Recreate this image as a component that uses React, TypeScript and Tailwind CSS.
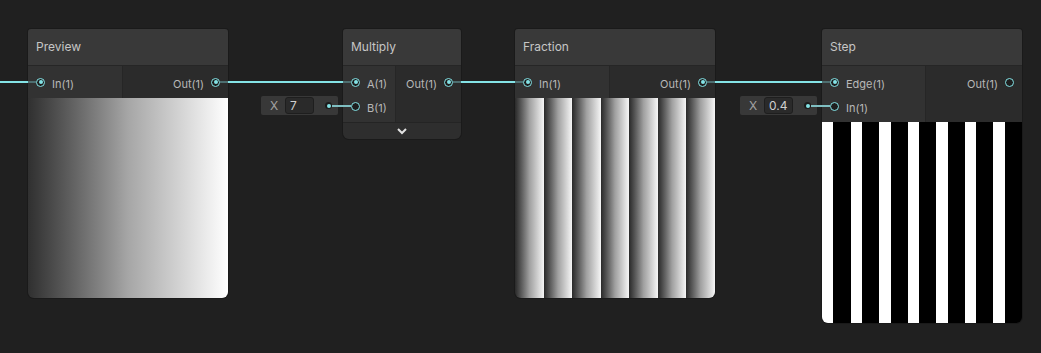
import React from "react";

type Port = { label: string; connected: boolean };

const Ring: React.FC<{ connected: boolean }> = ({ connected }) => (
  <span className="w-[9px] h-[9px] shrink-0 rounded-full border-[1.5px] border-[#84e3e6] bg-[#1e1e1e] flex items-center justify-center">
    {connected && <span className="w-[4px] h-[4px] rounded-full bg-[#84e3e6]" />}
  </span>
);

interface NodeProps {
  title: string;
  pos: string;
  inputCol: string;
  inputs: Port[];
  outputs: Port[];
  children?: React.ReactNode;
  collapse?: boolean;
}

const Node: React.FC<NodeProps> = ({ title, pos, inputCol, inputs, outputs, children, collapse }) => (
  <div className={`absolute ${pos} rounded-t-[3px] rounded-b-[6px] overflow-hidden shadow-[0_0_0_1px_#1a1a1a]`}>
    <div className="h-[36px] bg-[#393939] px-2 flex items-center text-[12px] text-[#c6c6c6]">{title}</div>
    <div className="flex border-t border-[#262626]">
      <div className={`${inputCol} bg-[#323232] border-r border-[#262626] pt-[4px] pb-[4px]`}>
        {inputs.map((p) => (
          <div key={p.label} className="h-[24px] pl-[8px] flex items-center gap-[7px]">
            <Ring connected={p.connected} />
            <span className="pt-[4px] text-[11px] text-[#b8b8b8]">{p.label}</span>
          </div>
        ))}
      </div>
      <div className="flex-1 bg-[#2b2b2b] pt-[4px] pb-[4px]">
        {outputs.map((p) => (
          <div key={p.label} className="h-[24px] pr-[8px] flex items-center justify-end gap-[7px]">
            <span className="pt-[4px] text-[11px] text-[#b8b8b8]">{p.label}</span>
            <Ring connected={p.connected} />
          </div>
        ))}
      </div>
    </div>
    {collapse && (
      <div className="h-[17px] bg-[#2e2e2e] border-t border-[#242424] flex items-center justify-center">
        <svg width="12" height="8" viewBox="0 0 12 8">
          <path d="M2 2 L6 6 L10 2" fill="none" stroke="#e2e2e2" strokeWidth="2" />
        </svg>
      </div>
    )}
    {children}
  </div>
);

const Field: React.FC<{ pos: string; value: string }> = ({ pos, value }) => (
  <div className={`absolute ${pos} h-[19px] w-[77px] bg-[#383838] rounded-[2px] flex items-center pl-[9px]`}>
    <span className="text-[12px] text-[#a2a2a2] w-[15px]">X</span>
    <span className="w-[29px] h-[17px] bg-[#2a2a2a] border border-[#1e1e1e] rounded-[3px] text-[12px] text-[#cfcfcf] pl-[4px] leading-[15px]">
      {value}
    </span>
    <span className="ml-[11px] w-[7px] h-[7px] rounded-full bg-[#1c1c1c] flex items-center justify-center">
      <span className="w-[4px] h-[4px] rounded-full bg-[#84e3e6]" />
    </span>
  </div>
);

export default function App() {
  const bright = "#84e3e6";
  const dim = "#4d6e70";
  return (
    <div className="relative w-[1041px] h-[353px] bg-[#202020] overflow-hidden font-['Inter',sans-serif]">
      <Node
        title="Preview"
        pos="left-[28px] top-[29px] w-[200px]"
        inputCol="w-[95px]"
        inputs={[{ label: "In(1)", connected: true }]}
        outputs={[{ label: "Out(1)", connected: true }]}
      >
        <div className="h-[200px] bg-linear-to-r from-[#303030] via-[#a6a6a6] to-white" />
      </Node>

      <Node
        title="Multiply"
        pos="left-[343px] top-[29px] w-[118px]"
        inputCol="w-[53px]"
        inputs={[
          { label: "A(1)", connected: true },
          { label: "B(1)", connected: false },
        ]}
        outputs={[{ label: "Out(1)", connected: true }]}
        collapse
      />

      <Node
        title="Fraction"
        pos="left-[515px] top-[29px] w-[200px]"
        inputCol="w-[95px]"
        inputs={[{ label: "In(1)", connected: true }]}
        outputs={[{ label: "Out(1)", connected: true }]}
      >
        <div className="h-[200px] flex">
          {[0, 1, 2, 3, 4, 5, 6].map((i) => (
            <div key={i} className="flex-1 bg-linear-to-r from-[#2a2a2a] via-[#a0a0a0] to-[#f6f6f6]" />
          ))}
        </div>
      </Node>

      <Node
        title="Step"
        pos="left-[822px] top-[29px] w-[200px]"
        inputCol="w-[104px]"
        inputs={[
          { label: "Edge(1)", connected: true },
          { label: "In(1)", connected: false },
        ]}
        outputs={[{ label: "Out(1)", connected: false }]}
      >
        <div className="h-[201px] flex">
          {[0, 1, 2, 3, 4, 5, 6].map((i) => (
            <div key={i} className="flex-1 flex">
              <div className="w-[40%] bg-white" />
              <div className="flex-1 bg-black" />
            </div>
          ))}
        </div>
      </Node>

      <Field pos="left-[261px] top-[96px]" value="7" />
      <Field pos="left-[740px] top-[96px]" value="0.4" />

      <svg className="absolute inset-0 pointer-events-none" width="1041" height="353">
        <g strokeWidth="2">
          <line x1="0" y1="82" x2="28" y2="82" stroke={bright} />
          <line x1="228" y1="82" x2="343" y2="82" stroke={bright} />
          <line x1="461" y1="82" x2="515" y2="82" stroke={bright} />
          <line x1="715" y1="82" x2="822" y2="82" stroke={bright} />

          <line x1="28" y1="82" x2="36" y2="82" stroke={dim} />
          <line x1="220" y1="82" x2="228" y2="82" stroke={dim} />
          <line x1="343" y1="82" x2="351" y2="82" stroke={dim} />
          <line x1="453" y1="82" x2="461" y2="82" stroke={dim} />
          <line x1="515" y1="82" x2="523" y2="82" stroke={dim} />
          <line x1="707" y1="82" x2="715" y2="82" stroke={dim} />
          <line x1="822" y1="82" x2="830" y2="82" stroke={dim} />

          <line x1="332" y1="106" x2="351" y2="106" stroke="#7fbfc2" />
          <line x1="811" y1="106" x2="830" y2="106" stroke="#7fbfc2" />
        </g>
      </svg>
    </div>
  );
}
